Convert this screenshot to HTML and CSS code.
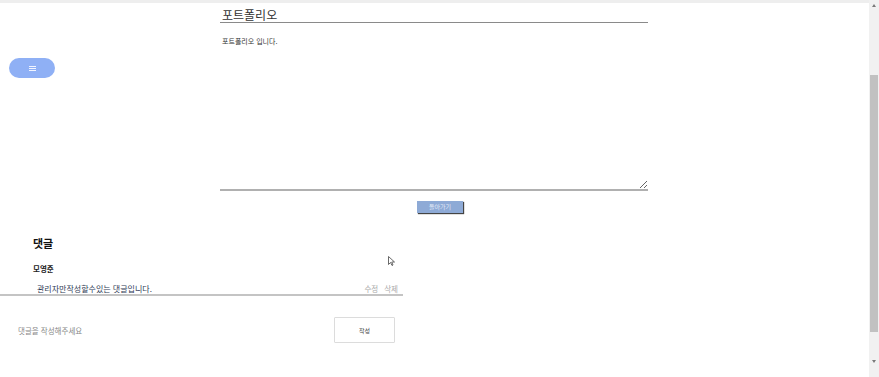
FILE: index.html
```html
<!DOCTYPE html>
<html lang="ko">
<head>
<meta charset="utf-8">
<title>포트폴리오</title>
<link rel="stylesheet" href="styles.css">
</head>
<body>
<div class="page">
  <div class="topbar"></div>
  <button class="menu-btn" aria-label="메뉴">
    <span class="bar"></span><span class="bar"></span><span class="bar"></span>
  </button>
  <section class="editor">
    <div class="title">포트폴리오</div>
    <textarea class="content">포트폴리오 입니다.</textarea>
    <div class="back-row"><button class="back-btn">돌아가기</button></div>
  </section>
  <section class="comments">
    <h2 class="comments-title">댓글</h2>
    <div class="author">모영준</div>
    <div class="comment-row">
      <span class="comment-text">관리자만작성할수있는 댓글입니다.</span>
      <span class="actions"><span>수정</span><span>삭제</span></span>
    </div>
    <div class="write-row">
      <span class="placeholder">댓글을 작성해주세요</span>
      <button class="write-btn">작성</button>
    </div>
  </section>
  <svg class="cursor" width="8" height="11" viewBox="0 0 8 11"><path d="M0.5 0.5 L0.5 8.5 L2.5 6.5 L4 9.5 L5 9 L3.7 6 L6.5 6 Z" fill="#fff" stroke="#444" stroke-width="0.8"/></svg>
</div>
<div class="scrollbar">
  <div class="arrow up"></div>
  <div class="thumb"></div>
  <div class="arrow down"></div>
</div>
</body>
</html>
```
FILE: styles.css
```css
html, body {
  margin: 0;
  padding: 0;
}
body {
  display: flex;
  height: 377px;
  overflow: hidden;
  background: #fff;
  font-family: "Noto Sans CJK KR", "Noto Sans", sans-serif;
  color: #222;
}
.page {
  flex: 1;
  position: relative;
}
.topbar {
  height: 3px;
  background: #eeeeee;
}
.menu-btn {
  position: absolute;
  left: 9px;
  top: 58px;
  width: 46px;
  height: 20px;
  border: none;
  border-radius: 10px;
  background: #8fb0f5;
  padding: 0;
  display: flex;
  flex-direction: column;
  align-items: center;
  justify-content: center;
  gap: 1px;
}
.menu-btn .bar {
  display: block;
  width: 7px;
  height: 1px;
  background: #f2f5ff;
}
.editor {
  margin-left: 220px;
  width: 428px;
}
.title {
  font-size: 12px;
  line-height: 14px;
  padding: 5px 0 0 2px;
  height: 14px;
  color: #333;
  border-bottom: 1px solid #8a8a8a;
}
.content {
  display: block;
  box-sizing: border-box;
  width: 428px;
  height: 168px;
  margin: 0;
  border: none;
  border-bottom: 2px solid #b0b0b0;
  padding: 14px 2px 0;
  font-family: "Noto Sans CJK KR", sans-serif;
  font-size: 7px;
  line-height: 8px;
  color: #333;
  outline: none;
  resize: vertical;
}
.back-row {
  padding: 10px 0 0 197px;
}
.back-btn {
  display: block;
  width: 46px;
  height: 12px;
  padding: 0;
  border: none;
  background: #8eaad6;
  box-shadow: 1px 1px 1px #444;
  color: #e4ebf7;
  font-family: "Noto Sans CJK KR", sans-serif;
  font-size: 6px;
  line-height: 12px;
}
.comments {
  margin-top: 23px;
}
.comments-title {
  margin: 0 0 0 33px;
  font-size: 11px;
  line-height: 14px;
  font-weight: 700;
  color: #111;
}
.author {
  margin: 14px 0 0 33px;
  font-size: 7.5px;
  line-height: 9px;
  font-weight: 700;
  color: #222;
}
.comment-row {
  margin-top: 9px;
  width: 403px;
  box-sizing: border-box;
  height: 14px;
  padding: 0 5px 0 37px;
  display: flex;
  justify-content: space-between;
  align-items: center;
  border-bottom: 2px solid #c4c4c4;
  font-size: 7.5px;
  line-height: 9px;
}
.comment-text {
  font-size: 8px;
  color: #2e3a55;
}
.actions {
  display: flex;
  gap: 6px;
  color: #aaaaaa;
}
.write-row {
  margin-top: 21px;
  width: 395px;
  box-sizing: border-box;
  padding-left: 18px;
  display: flex;
  justify-content: space-between;
  align-items: center;
}
.placeholder {
  font-size: 7.5px;
  color: #888;
}
.write-btn {
  width: 61px;
  height: 26px;
  box-sizing: border-box;
  border: 1px solid #dcdcdc;
  border-radius: 1px;
  background: #fff;
  font-family: "Noto Sans CJK KR", sans-serif;
  font-size: 6px;
  color: #444;
  padding: 0;
}
.cursor {
  position: absolute;
  left: 388px;
  top: 256px;
}
.scrollbar {
  width: 10px;
  background: #f1f1f1;
  display: flex;
  flex-direction: column;
  align-items: center;
  padding-top: 4px;
}
.arrow {
  width: 0;
  height: 0;
  border-left: 2px solid transparent;
  border-right: 2px solid transparent;
}
.arrow.up {
  border-bottom: 3px solid #7a7a7a;
}
.arrow.down {
  border-top: 3px solid #7a7a7a;
  margin-top: 28px;
}
.thumb {
  width: 8px;
  height: 257px;
  margin-top: 68px;
  background: #c1c1c1;
}
```
